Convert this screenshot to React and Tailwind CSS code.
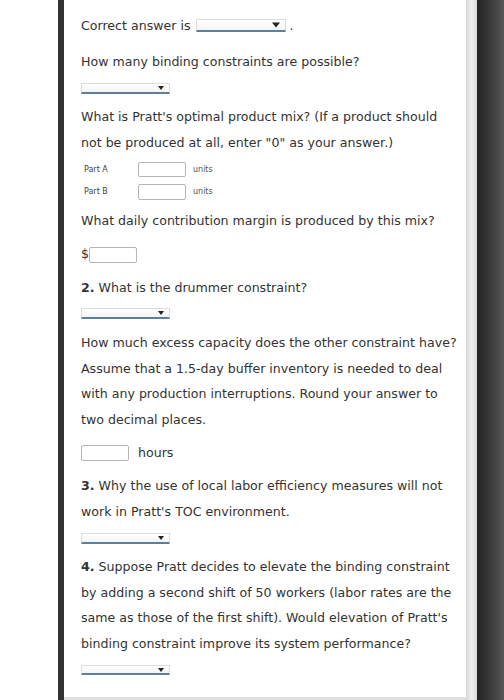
import React from "react";

function Select({ w = "w-[89px]", h = "h-[11px]", big = false }) {
  return (
    <span
      className={`relative inline-block align-middle ${w} ${h} bg-gradient-to-b from-white to-[#f4f4f4] border border-[#dcdcdc] border-b-2 border-b-[#5f7f98] rounded-[1px]`}
    >
      {big ? (
        <span className="absolute right-[5px] top-1/2 -translate-y-1/2 w-0 h-0 border-l-[4px] border-r-[4px] border-t-[5px] border-l-transparent border-r-transparent border-t-[#222]" />
      ) : (
        <span className="absolute right-[5px] top-1/2 -translate-y-1/2 w-0 h-0 border-l-[3px] border-r-[3px] border-t-[4px] border-l-transparent border-r-transparent border-t-[#222]" />
      )}
    </span>
  );
}

function Input({ w = "w-[48px]", h = "h-[16px]" }) {
  return (
    <span
      className={`inline-block align-middle ${w} ${h} bg-white border border-[#b5b5b5] rounded-[2px]`}
    />
  );
}

export default function App() {
  return (
    <div
      className="flex w-[504px] h-[700px] overflow-hidden bg-white text-[#333]"
      style={{ fontFamily: '"DejaVu Sans", Verdana, sans-serif' }}
    >
      <div className="w-[58px] shrink-0 bg-white" />
      <div className="w-[6px] shrink-0 bg-[#333]" />
      <div className="flex flex-col w-[402px] shrink-0">
        <div className="flex-1 pl-[17px] pt-[13px] text-[12.6px] leading-[25.5px] whitespace-nowrap">
          <div className="flex items-center h-[25.5px]">
            <span>Correct answer is</span>
            <span className="ml-[5px] flex">
              <Select w="w-[90px]" h="h-[13px]" big />
            </span>
            <span className="ml-[4px]">.</span>
          </div>

          <div className="mt-[10px]">How many binding constraints are possible?</div>

          <div className="mt-[9px] flex">
            <Select />
          </div>

          <div className="mt-[10px]">
            What is Pratt's optimal product mix? (If a product should
            <br />
            not be produced at all, enter "0" as your answer.)
          </div>

          <div className="mt-[7px] flex items-center h-[15px] text-[8px] leading-none">
            <span className="w-[57px] pl-[3px] text-[#444]">Part A</span>
            <Input h="h-[15px]" />
            <span className="ml-[7px] text-[#555]">units</span>
          </div>
          <div className="mt-[7px] flex items-center h-[16px] text-[8px] leading-none">
            <span className="w-[57px] pl-[3px] text-[#444]">Part B</span>
            <Input h="h-[16px]" />
            <span className="ml-[7px] text-[#555]">units</span>
          </div>

          <div className="mt-[8px]">What daily contribution margin is produced by this mix?</div>

          <div className="mt-[13px] flex items-center h-[16px]">
            <span className="leading-none">$</span>
            <Input />
          </div>

          <div className="mt-[12px]">
            <span className="font-bold">2.</span> What is the drummer constraint?
          </div>

          <div className="mt-[8px] flex">
            <Select />
          </div>

          <div className="mt-[11px]">
            How much excess capacity does the other constraint have?
            <br />
            Assume that a 1.5-day buffer inventory is needed to deal
            <br />
            with any production interruptions. Round your answer to
            <br />
            two decimal places.
          </div>

          <div className="mt-[13px] flex items-center h-[16px]">
            <Input />
            <span className="ml-[9px] leading-none">hours</span>
          </div>

          <div className="mt-[12px]">
            <span className="font-bold">3.</span> Why the use of local labor efficiency measures will not
            <br />
            work in Pratt's TOC environment.
          </div>

          <div className="mt-[9px] flex">
            <Select />
          </div>

          <div className="mt-[10px]">
            <span className="font-bold">4.</span> Suppose Pratt decides to elevate the binding constraint
            <br />
            by adding a second shift of 50 workers (labor rates are the
            <br />
            same as those of the first shift). Would elevation of Pratt's
            <br />
            binding constraint improve its system performance?
          </div>

          <div className="mt-[9px] flex">
            <Select h="h-[10px]" />
          </div>
        </div>
        <div className="h-[3px] bg-[#e0e0e0]" />
      </div>
      <div className="w-[11px] shrink-0 bg-gradient-to-r from-[#d6d6d6] via-[#f0f0f0] to-[#d9d9d9]" />
      <div className="flex-1 bg-gradient-to-r from-[#242424] via-[#3a3a3a] to-[#575757]" />
    </div>
  );
}
